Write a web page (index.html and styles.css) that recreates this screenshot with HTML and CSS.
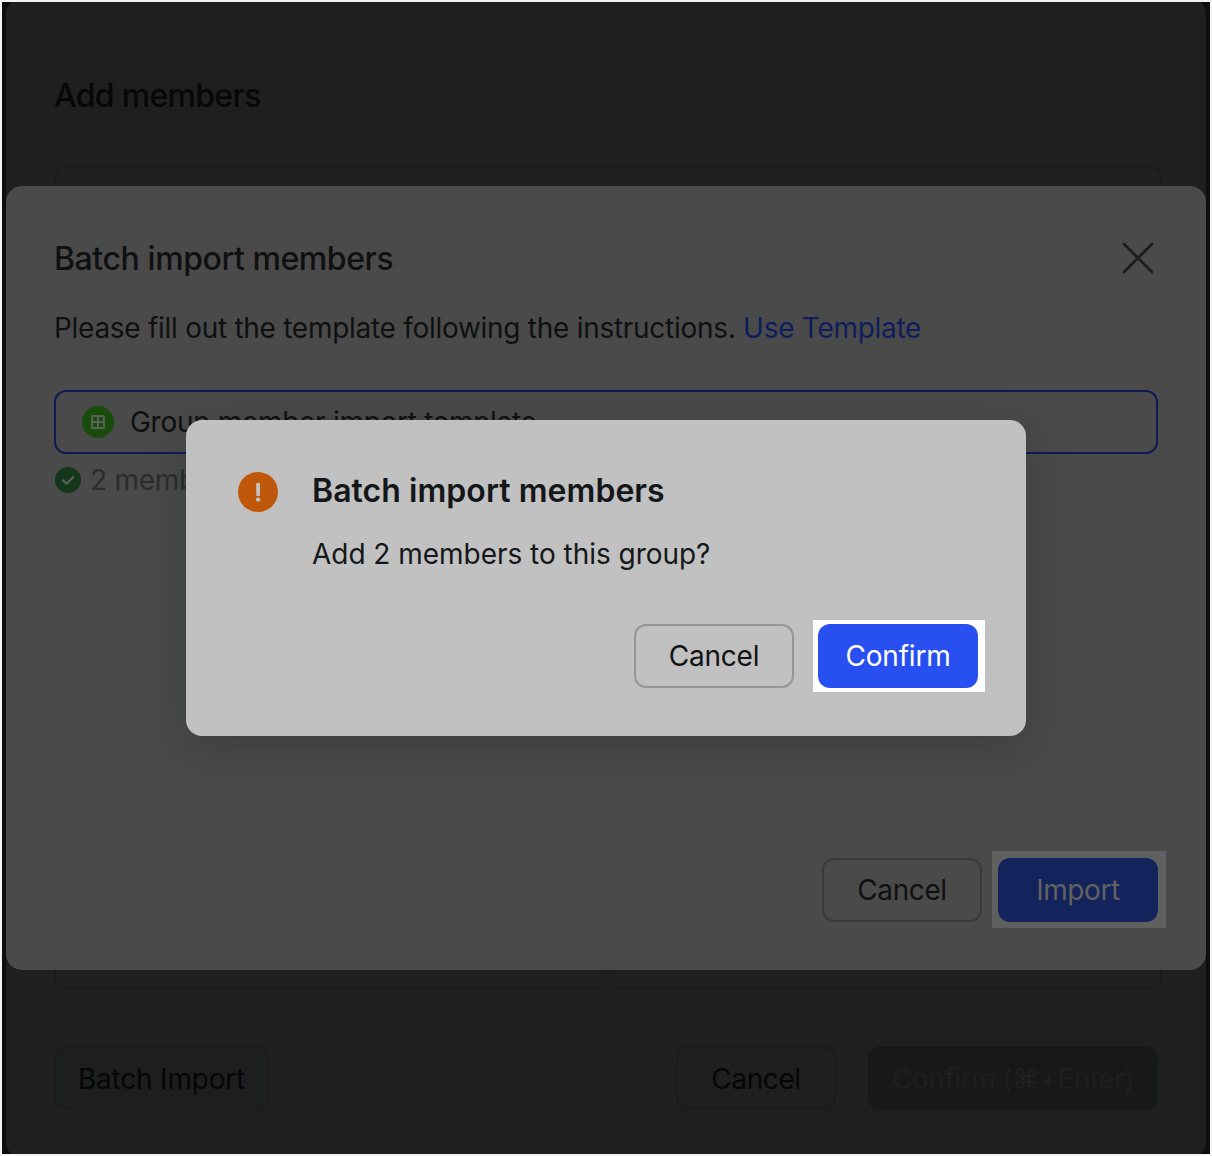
FILE: index.html
```html
<!DOCTYPE html>
<html lang="en">
<head>
    <meta charset="UTF-8">
    <title>Batch import members</title>
    <link rel="stylesheet" href="styles.css">
</head>
<body>
    <div class="screen">
        <section class="members">
            <h1 class="members-title">Add members</h1>
            <div class="picker">
                <div class="picker-col"></div>
                <div class="picker-col"></div>
            </div>
            <footer class="members-footer">
                <button class="btn btn-batch">Batch Import</button>
                <button class="btn btn-dim">Cancel</button>
                <button class="btn btn-disabled">Confirm (⌘+Enter)</button>
            </footer>
        </section>

        <section class="import">
            <header class="import-header">
                <h2 class="import-title">Batch import members</h2>
                <svg class="close" width="32" height="32" viewBox="0 0 32 32">
                    <path d="M2 2 30 30M30 2 2 30" fill="none" stroke="#1b1c1e" stroke-width="2.8" stroke-linecap="round"/>
                </svg>
            </header>
            <p class="import-text">Please fill out the template following the instructions. <a class="link">Use Template</a></p>
            <div class="file">
                <svg width="32" height="32" viewBox="0 0 32 32">
                    <circle cx="16" cy="16" r="16" fill="#184c0b"/>
                    <path d="M10 9h11l2 2v11a1 1 0 0 1-1 1H10a1 1 0 0 1-1-1V10a1 1 0 0 1 1-1z" fill="#5b6158"/>
                    <path d="M11 11h4v4h-4zM17 11h3.200l.8.8V15h-4zM11 17h4v4h-4zM17 17h4v4h-4z" fill="#184c0b"/>
                </svg>
                <span class="file-name">Group member import template</span>
            </div>
            <div class="status">
                <svg width="26" height="26" viewBox="0 0 26 26">
                    <circle cx="13" cy="13" r="13" fill="#14361a"/>
                    <path d="M8 13.300 11.500 16.800 18.300 10" fill="none" stroke="#5d635e" stroke-width="2.200" stroke-linecap="round" stroke-linejoin="round"/>
                </svg>
                <span class="status-text">2 members</span>
            </div>
            <footer class="import-footer">
                <button class="btn btn-outline">Cancel</button>
                <div class="mark mark-import"><button class="btn btn-import">Import</button></div>
            </footer>
        </section>

        <section class="alert">
            <svg class="alert-icon" width="40" height="40" viewBox="0 0 40 40">
                <circle cx="20" cy="20" r="20" fill="#c0580c"/>
                <rect x="18.200" y="11" width="3.800" height="13" rx="1" fill="#c3c0bd"/>
                <rect x="18" y="25.500" width="4.200" height="4" rx="1.500" fill="#c3c0bd"/>
            </svg>
            <div class="alert-body">
                <h2 class="alert-title">Batch import members</h2>
                <p class="alert-text">Add 2 members to this group?</p>
            </div>
            <footer class="alert-footer">
                <button class="btn btn-light">Cancel</button>
                <div class="mark mark-confirm"><button class="btn btn-confirm">Confirm</button></div>
            </footer>
        </section>
    </div>
</body>
</html>
```

FILE: styles.css
```css
* {
    box-sizing: border-box;
}

body {
    margin: 0;
    padding: 2px;
    background: #f4f4f4;
    font-family: Inter, "Liberation Sans", sans-serif;
    font-size: 28px;
    line-height: 44px;
    letter-spacing: -0.28px;
}

h1, h2, p {
    margin: 0;
}

h1, h2 {
    font-size: 32px;
    font-weight: 500;
    line-height: 48px;
    letter-spacing: -0.42px;
}

.screen {
    position: relative;
    width: 1208px;
    height: 1152px;
    overflow: hidden;
    background: #0e0e0e;
}

.btn {
    width: 160px;
    height: 64px;
    padding: 0;
    border: 2px solid transparent;
    border-radius: 12px;
    background: none;
    font: inherit;
    letter-spacing: -0.4px;
    color: #0f1011;
    white-space: nowrap;
}

/* bottom layer */
.members {
    height: 1160px;
    margin: -4px 4px 0;
    padding: 74px 44px 0 48px;
    border-radius: 16px;
    background: #1f1f1f;
}

.members-title {
    color: #070707;
    letter-spacing: -0.7px;
}

.picker {
    display: flex;
    height: 824px;
    margin-top: 46px;
    border: 2px solid #1b1b1b;
    border-radius: 12px;
}

.picker-col {
    flex: 1;
}

.picker-col + .picker-col {
    border-left: 2px solid #1b1b1b;
}

.members-footer {
    display: flex;
    gap: 32px;
    margin-top: 56px;
    padding-right: 4px;
}

.members-footer .btn {
    padding-top: 1px;
    color: #060606;
}

.members-footer .btn-batch {
    width: 215px;
    margin-right: auto;
    border-color: #1b1c1b;
    background: #1d1f1e;
    letter-spacing: -0.2px;
}

.members-footer .btn-dim {
    border-color: #1b1b1b;
}

.members-footer .btn-disabled {
    width: 290px;
    background: #171918;
    color: #1f1f1f;
    letter-spacing: -0.5px;
}

/* import dialog */
.import {
    position: absolute;
    top: 184px;
    left: 4px;
    display: flex;
    flex-direction: column;
    width: 1200px;
    height: 784px;
    padding: 48px 40px 42px 48px;
    border-radius: 16px;
    background: #4a4a4a;
    color: #0f1011;
}

.import-header {
    display: flex;
    align-items: center;
    justify-content: space-between;
    height: 48px;
    padding-right: 12px;
}

.import-title {
    padding-top: 2px;
}

.import-text {
    margin-top: 24px;
}

.link {
    color: #0f1d5c;
}

.file {
    display: flex;
    align-items: center;
    gap: 16px;
    height: 64px;
    margin: 40px 8px 0 0;
    padding: 0 26px;
    border: 2px solid #0d1a57;
    border-radius: 12px;
}

.status {
    display: flex;
    align-items: center;
    gap: 9px;
    margin-top: 4px;
    padding-left: 1px;
    color: #2a2c2e;
}

.import-footer {
    display: flex;
    align-items: center;
    justify-content: flex-end;
    gap: 10px;
    margin-top: auto;
}

.btn-outline {
    border-color: #3a3a3b;
}

.mark-import {
    height: 77px;
    padding: 7px 8px 6px 6px;
    background: #606060;
}

.btn-import {
    display: block;
    background: #13235c;
    color: #626262;
}

/* confirm dialog on top */
.alert {
    position: absolute;
    top: 418px;
    left: 184px;
    display: grid;
    grid-template-columns: 40px 1fr;
    grid-template-rows: auto 1fr;
    column-gap: 34px;
    width: 840px;
    height: 316px;
    padding: 47px 41px 44px 52px;
    border-radius: 16px;
    background: #c1c1c1;
    box-shadow: 0 12px 40px rgba(20, 28, 26, 0.25);
    color: #14171a;
}

.alert-icon {
    margin-top: 5px;
}

.alert-title {
    font-weight: 600;
    letter-spacing: 0.05px;
}

.alert-text {
    margin-top: 17px;
    letter-spacing: -0.03px;
}

.alert-footer {
    grid-column: 1 / 3;
    display: flex;
    align-items: center;
    justify-content: flex-end;
    align-self: end;
    gap: 19px;
}

.alert .btn {
    letter-spacing: -0.2px;
}

.btn-light {
    border-color: #959699;
    color: #101214;
}

.mark-confirm {
    height: 72px;
    padding: 4px 7px 4px 5px;
    background: #fff;
}

.btn-confirm {
    display: block;
    background: #2850f0;
    color: #fff;
}
```
